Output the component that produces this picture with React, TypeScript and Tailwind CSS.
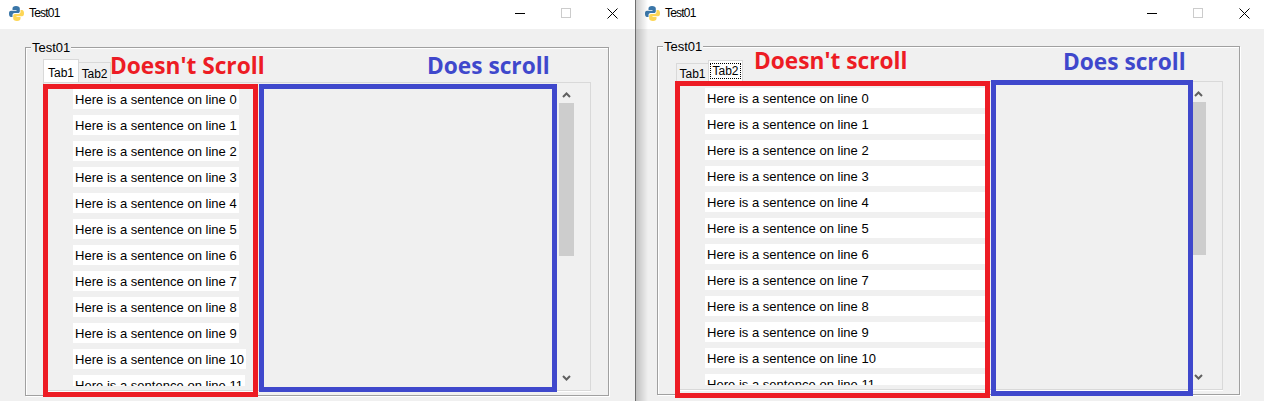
const lines = Array.from({ length: 12 }, (_, i) => `Here is a sentence on line ${i}`);

const PythonLogo = () => (
  <svg width="17" height="17" viewBox="0 0 17 17" className="shrink-0">
    <path d="M8 1C5.5 1 4.5 2 4.5 3.5V5H8.500V5.800H3C1.500 5.800 1 7 1 8.800C1 10.600 1.600 12 3 12H4.500V10C4.500 8.800 5.500 8 6.500 8H10C11 8 11.800 7.200 11.800 6.200V3.500C11.800 2 10.500 1 8 1Z" fill="#3a76a8" />
    <path d="M9 16C11.500 16 12.500 15 12.500 13.500V12H8.500V11.200H14C15.500 11.200 16 10 16 8.200C16 6.400 15.400 5 14 5H12.500V7C12.500 8.200 11.500 9 10.500 9H7C6 9 5.200 9.800 5.200 10.800V13.500C5.200 15 6.500 16 9 16Z" fill="#fdd655" />
  </svg>
);

const TitleBar = () => (
  <div className="flex h-[29px] items-center bg-white pb-[3px] pl-[8px]">
    <PythonLogo />
    <span className="ml-[4px] text-[12px] tracking-[-0.8px] text-black">Test01</span>
    <div className="ml-auto flex">
      <div className="flex h-[26px] w-[46px] items-center justify-center">
        <div className="h-px w-[10px] bg-black" />
      </div>
      <div className="flex h-[26px] w-[46px] items-center justify-center">
        <div className="h-[10px] w-[10px] border border-[#cccccc]" />
      </div>
      <div className="flex h-[26px] w-[46px] items-center justify-center">
        <svg width="11" height="11" viewBox="0 0 11 11">
          <path d="M0.500 0.500L10.500 10.500M10.500 0.500L0.500 10.500" stroke="#000" strokeWidth="1" fill="none" />
        </svg>
      </div>
    </div>
  </div>
);

const Chevron = ({ down }: { down?: boolean }) => (
  <svg width="9" height="6" viewBox="0 0 9 6" className="mx-auto">
    <path d={down ? "M1 1L4.500 4.500L8 1" : "M1 5L4.500 1.500L8 5"} stroke="#606060" strokeWidth="2" fill="none" />
  </svg>
);

const ScrollBar = () => (
  <div className="mr-[16px] flex w-[15px] flex-col">
    <div className="flex h-[14px] items-center justify-center pb-[2px]">
      <Chevron />
    </div>
    <div className="h-[153px] bg-[#cdcdcd]" />
    <div className="mt-auto flex h-[15px] items-start">
      <Chevron down />
    </div>
  </div>
);

const Rows = ({ wide }: { wide?: boolean }) => (
  <div className="flex h-[297px] flex-col gap-[6px] overflow-hidden">
    {lines.map((line) => (
      <div
        key={line}
        className={
          wide
            ? "h-[20px] w-[281px] shrink-0 bg-white pl-[2px] text-[13px] leading-[22px] tracking-[0.02px] text-black"
            : "h-[20px] w-fit shrink-0 bg-white px-[2px] text-[13px] leading-[22px] tracking-[0.02px] text-black"
        }
      >
        {line}
      </div>
    ))}
  </div>
);

const LeftWindow = () => (
  <div className="relative h-[401px] w-[635px] shrink-0 bg-[#f0f0f0]">
    <TitleBar />
    <div className="relative ml-[25px] mt-[18px] h-[349px] w-[584px] border border-[#a0a0a0] pl-[17px] pt-[12px] shadow-[1px_1px_0_#fff,inset_1px_1px_0_#fff]">
      <span className="absolute left-[5px] top-[-8px] bg-[#f0f0f0] px-px text-[13px] leading-[15px] text-black">Test01</span>
      <div className="flex h-[22px] items-end">
        <div className="flex h-[23px] w-[36px] items-center justify-center border border-b-0 border-[#d9d9d9] bg-white pt-[3px] text-[12px]">Tab1</div>
        <div className="flex h-[20px] w-[32px] items-center justify-center border border-b-0 border-l-0 border-[#d9d9d9] pt-[2px] text-[12px] tracking-[-0.1px]">Tab2</div>
      </div>
      <div className="flex h-[309px] w-[548px] justify-between border border-[#d9d9d9] pl-[29px] pt-[6px] shadow-[0_1px_0_#fff]">
        <Rows />
        <ScrollBar />
      </div>
    </div>
  </div>
);

const RightWindow = () => (
  <div className="relative h-[401px] w-[628px] shrink-0 border-l border-[#6e6e6e] bg-[#f0f0f0]">
    <div className="w-[631px]">
      <TitleBar />
    </div>
    <div className="relative ml-[21px] mt-[17px] h-[349px] w-[583px] border border-[#a0a0a0] pl-[17px] pt-[13px] shadow-[1px_1px_0_#fff,inset_1px_1px_0_#fff]">
      <span className="absolute left-[5px] top-[-8px] bg-[#f0f0f0] px-px text-[13px] leading-[15px] text-black">Test01</span>
      <div className="flex h-[21px] items-end pl-px">
        <div className="flex h-[18px] w-[32px] items-center justify-center border border-b-0 border-r-0 border-[#d9d9d9] pt-[2px] text-[12px]">Tab1</div>
        <div className="flex h-[21px] w-[35px] items-center justify-center border border-b-0 border-[#d9d9d9] bg-white text-[12px]">
          <span className="border border-dotted border-black px-px leading-[14px]">Tab2</span>
        </div>
      </div>
      <div className="flex h-[309px] w-[548px] justify-between border border-[#d9d9d9] pl-[29px] pt-[6px] shadow-[0_1px_0_#fff]">
        <Rows wide />
        <ScrollBar />
      </div>
    </div>
    <div className="pointer-events-none absolute left-0 top-0 h-full w-[12px] bg-gradient-to-r from-[#00000033] to-transparent" />
  </div>
);

export default function App() {
  return (
    <div className="relative flex h-[401px] w-[1264px] overflow-hidden bg-[#f0f0f0] font-['Liberation_Sans',Arial,sans-serif] text-black">
      <LeftWindow />
      <RightWindow />

      {/* annotations drawn on top of the two screenshots */}
      <div className="absolute left-[43px] top-[84px] h-[313px] w-[215px] border-[5px] border-[#ed1c24]" />
      <div className="absolute left-[259px] top-[84px] h-[308px] w-[298px] border-[5px] border-[#3f48cc]" />
      <div className="absolute left-[675px] top-[81px] h-[317px] w-[315px] border-[5px] border-[#ed1c24]" />
      <div className="absolute left-[991px] top-[80px] h-[316px] w-[202px] border-[5px] border-[#3f48cc]" />
      <span className="absolute left-[110px] top-[50px] font-['Open_Sans',sans-serif] text-[22.7px] font-bold leading-[32px] text-[#ed1c24]">Doesn't Scroll</span>
      <span className="absolute left-[427px] top-[50px] font-['Open_Sans',sans-serif] text-[22.7px] font-bold leading-[32px] text-[#3f48cc]">Does scroll</span>
      <span className="absolute left-[754px] top-[45px] font-['Open_Sans',sans-serif] text-[22.7px] font-bold leading-[32px] text-[#ed1c24]">Doesn't scroll</span>
      <span className="absolute left-[1063px] top-[46px] font-['Open_Sans',sans-serif] text-[22.7px] font-bold leading-[32px] text-[#3f48cc]">Does scroll</span>
    </div>
  );
}
